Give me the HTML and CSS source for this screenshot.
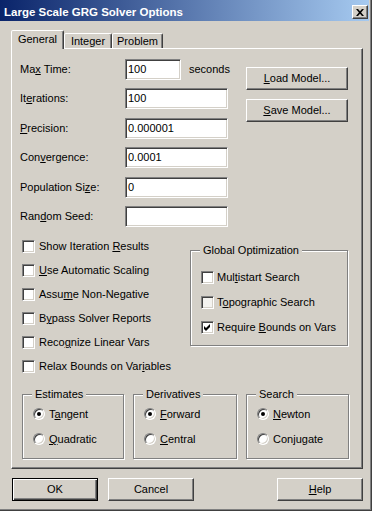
FILE: index.html
```html
<!DOCTYPE html>
<html>
<head>
<meta charset="utf-8">
<link rel="stylesheet" href="styles.css">
</head>
<body>
<div class="window">
  <div class="titlebar">
    <span class="title">Large Scale GRG Solver Options</span>
    <span class="close"><svg width="8" height="7" viewBox="0 0 8 7"><path d="M0 0H2L4 2.2L6 0H8L5.1 3.5L8 7H6L4 4.8L2 7H0L2.9 3.5Z" fill="#000"/></svg></span>
  </div>
  <div class="dialog">
    <div class="tabs">
      <div class="tab active t-general">General</div>
      <div class="tab t-integer">Integer</div>
      <div class="tab t-problem">Problem</div>
    </div>
    <div class="panel">
      <div class="top">
        <div class="fields">
          <div class="field"><span class="lbl">Ma<u>x</u> Time:</span><span class="input short">100</span><span class="unit">seconds</span></div>
          <div class="field"><span class="lbl">It<u>e</u>rations:</span><span class="input">100</span></div>
          <div class="field"><span class="lbl"><u>P</u>recision:</span><span class="input">0.000001</span></div>
          <div class="field"><span class="lbl">Con<u>v</u>ergence:</span><span class="input">0.0001</span></div>
          <div class="field"><span class="lbl">Population Si<u>z</u>e:</span><span class="input">0</span></div>
          <div class="field"><span class="lbl">Ran<u>d</u>om Seed:</span><span class="input"></span></div>
        </div>
        <div class="side">
          <div class="btn side-btn"><span><u>L</u>oad Model...</span></div>
          <div class="btn side-btn"><span><u>S</u>ave Model...</span></div>
        </div>
      </div>
      <div class="middle">
        <div class="checks">
          <div class="check"><span class="box"></span><span>Show Iteration <u>R</u>esults</span></div>
          <div class="check"><span class="box"></span><span><u>U</u>se Automatic Scaling</span></div>
          <div class="check"><span class="box"></span><span>Assu<u>m</u>e Non-Negative</span></div>
          <div class="check"><span class="box"></span><span>B<u>y</u>pass Solver Reports</span></div>
          <div class="check"><span class="box"></span><span>Reco<u>g</u>nize Linear Vars</span></div>
          <div class="check"><span class="box"></span><span>Relax Bounds on Var<u>i</u>ables</span></div>
        </div>
        <fieldset class="group global">
          <legend>Global Optimization</legend>
          <div class="global-body">
            <div class="check"><span class="box"></span><span>Mul<u>t</u>istart Search</span></div>
            <div class="check"><span class="box dim"></span><span>T<u>o</u>pographic Search</span></div>
            <div class="check"><span class="box"><svg width="7" height="7" viewBox="0 0 7 7"><path d="M0 2L2 4L6 0V3L2 7L0 5Z" fill="#000"/></svg></span><span>Require <u>B</u>ounds on Vars</span></div>
          </div>
        </fieldset>
      </div>
      <div class="bottom">
        <fieldset class="group g-est">
          <legend>Estimates</legend>
          <div class="opts">
            <div class="opt"><span class="radio on"></span><span>T<u>a</u>ngent</span></div>
            <div class="opt"><span class="radio"></span><span><u>Q</u>uadratic</span></div>
          </div>
        </fieldset>
        <fieldset class="group g-der">
          <legend>Derivatives</legend>
          <div class="opts">
            <div class="opt"><span class="radio on"></span><span><u>F</u>orward</span></div>
            <div class="opt"><span class="radio"></span><span><u>C</u>entral</span></div>
          </div>
        </fieldset>
        <fieldset class="group g-search">
          <legend>Search</legend>
          <div class="opts">
            <div class="opt"><span class="radio on"></span><span><u>N</u>ewton</span></div>
            <div class="opt"><span class="radio"></span><span>Con<u>j</u>ugate</span></div>
          </div>
        </fieldset>
      </div>
    </div>
    <div class="buttons">
      <div class="btn wide ok">OK</div>
      <div class="btn wide cancel">Cancel</div>
      <div class="btn wide help"><span><u>H</u>elp</span></div>
    </div>
  </div>
</div>
</body>
</html>
```
FILE: styles.css
```css
html, body {
  margin: 0;
  padding: 0;
  background: #d4d0c8;
}
body {
  font-family: "Liberation Sans", Arial, sans-serif;
  font-size: 11px;
  line-height: 13px;
  color: #000;
}
u {
  text-decoration: underline;
  text-underline-offset: 1px;
}
.window {
  width: 372px;
  height: 511px;
  box-sizing: border-box;
  background: #d4d0c8;
  border-right: 1px solid #404040;
  border-bottom: 1px solid #404040;
  box-shadow: inset -1px -1px 0 #808080;
  display: flex;
  flex-direction: column;
  overflow: hidden;
}
.titlebar {
  height: 21px;
  margin-right: 2px;
  padding-left: 4px;
  background: linear-gradient(to right, #0a246a, #a6caf0);
  display: flex;
  align-items: center;
  justify-content: space-between;
}
.title {
  color: #fff;
  font-weight: bold;
  font-size: 11.5px;
  line-height: 13px;
  margin-top: 3px;
}
.close {
  align-self: flex-start;
  margin-top: 5px;
  margin-right: 1px;
  width: 16px;
  height: 14px;
  box-sizing: border-box;
  background: #d4d0c8;
  border: 1px solid;
  border-color: #fff #404040 #404040 #fff;
  box-shadow: inset -1px -1px 0 #808080;
  display: flex;
  align-items: center;
  justify-content: center;
}
.dialog {
  padding: 9px 0 0 11px;
}
.tabs {
  display: flex;
  align-items: flex-end;
  height: 18px;
}
.tab {
  height: 15px;
  box-sizing: border-box;
  border: 1px solid;
  border-bottom: 0;
  border-color: #fff #404040 transparent #fff;
  box-shadow: inset -1px 0 0 #808080;
  border-radius: 2px 2px 0 0;
  display: flex;
  align-items: center;
  justify-content: center;
  background: #d4d0c8;
}
.t-general { width: 53px; }
.t-integer { width: 48px; }
.t-problem { width: 51px; }
.tab.active {
  height: 19px;
  margin-bottom: -1px;
  position: relative;
  z-index: 1;
  padding-bottom: 1px;
}
.panel {
  width: 352px;
  box-sizing: border-box;
  border: 1px solid;
  border-color: #fff #404040 #404040 #fff;
  box-shadow: inset -1px -1px 0 #808080;
  padding: 10px 0 9px 8px;
}
.top {
  display: flex;
  align-items: flex-start;
}
.fields {
  width: 208px;
  display: flex;
  flex-direction: column;
  gap: 8.4px;
}
.field {
  height: 21px;
  display: flex;
  align-items: center;
}
.lbl {
  width: 105px;
  flex-shrink: 0;
}
.input {
  width: 103px;
  height: 21px;
  box-sizing: border-box;
  background: #fff;
  border: 1px solid;
  border-color: #808080 #fff #fff #808080;
  box-shadow: inset 1px 1px 0 #404040, inset -1px -1px 0 #d4d0c8;
  padding-left: 2px;
  display: flex;
  align-items: center;
  flex-shrink: 0;
}
.input.short {
  width: 56px;
}
.unit {
  margin-left: 8px;
}
.side {
  margin-left: 18px;
  margin-top: 8px;
  display: flex;
  flex-direction: column;
  gap: 9px;
}
.btn {
  height: 23px;
  box-sizing: border-box;
  border: 1px solid;
  border-color: #fff #404040 #404040 #fff;
  box-shadow: inset -1px -1px 0 #808080;
  display: flex;
  align-items: center;
  justify-content: center;
  background: #d4d0c8;
}
.side-btn {
  width: 102px;
}
.middle {
  display: flex;
  align-items: flex-start;
  margin-top: 8px;
}
.checks {
  width: 170px;
  flex-shrink: 0;
}
.check {
  height: 24px;
  display: flex;
  align-items: center;
  white-space: nowrap;
}
.box {
  width: 13px;
  height: 13px;
  box-sizing: border-box;
  background: #fff;
  border: 1px solid;
  border-color: #808080 #fff #fff #808080;
  box-shadow: inset 1px 1px 0 #404040, inset -1px -1px 0 #d4d0c8;
  margin: 0 4px 0 2px;
  display: flex;
  align-items: center;
  justify-content: center;
  flex-shrink: 0;
}
.box.dim {
  background: #f4f3f0;
}
.group {
  margin: 0;
  padding: 0;
  min-width: 0;
  border: 1px solid #808080;
  box-shadow: inset 1px 1px 0 #fff, 1px 1px 0 #fff;
  box-sizing: border-box;
}
.group legend {
  margin-left: 9px;
  padding: 0 3px;
  line-height: 13px;
  background: #d4d0c8;
}
.global {
  width: 158px;
  margin-top: 9px;
}
.global-body {
  padding: 8px 0 5px 10px;
}
.global-body .check {
  height: 25px;
}
.global-body .box {
  margin: 0 3px 0 0;
}
.bottom {
  display: flex;
  margin-top: 9px;
  margin-left: 2px;
}
.g-est { width: 102px; }
.g-der { width: 104px; margin-left: 9px; }
.g-search { width: 103px; margin-left: 9px; }
.opts {
  padding: 1px 0 6px 10px;
}
.opt {
  height: 25px;
  display: flex;
  align-items: center;
  white-space: nowrap;
}
.radio {
  width: 12px;
  height: 12px;
  box-sizing: border-box;
  border-radius: 50%;
  background: #fff;
  border: 1px solid;
  border-color: #808080 #fff #fff #808080;
  box-shadow: inset 1px 1px 0 #404040, inset -1px -1px 0 #d4d0c8;
  margin-right: 4px;
  display: flex;
  align-items: center;
  justify-content: center;
  flex-shrink: 0;
}
.radio.on::after {
  content: "";
  width: 4px;
  height: 4px;
  border-radius: 50%;
  background: #000;
}
.buttons {
  display: flex;
  width: 352px;
  margin-top: 9px;
}
.wide {
  width: 86px;
}
.ok {
  margin-left: 1px;
  border-color: #000;
  box-shadow: inset 1px 1px 0 #fff, inset -1px -1px 0 #404040, inset -2px -2px 0 #808080;
}
.cancel {
  margin-left: 10px;
}
.help {
  margin-left: auto;
}
```
